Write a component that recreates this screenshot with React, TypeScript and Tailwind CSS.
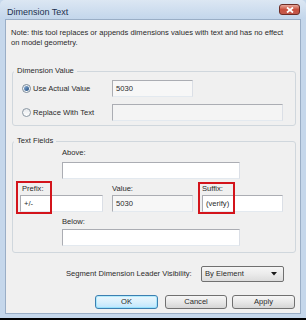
export default function App() {
  const inputBase =
    "h-[17px] border border-[#abadb3] border-r-[#dbdfe6] border-b-[#e3e9ef] flex items-center px-[3px]";
  const btn =
    "h-[14px] rounded-[3px] border border-[#707070] bg-gradient-to-b from-[#f6f6f6] via-[#e8e8e8] to-[#d6d6d6] flex items-center justify-center text-[#2a2a2a]";
  return (
    <div className="w-[306px] h-[320px] flex flex-col bg-[#c5d7eb] border-b-2 border-black font-['Liberation_Sans',sans-serif] text-[7.6px] leading-[10px] text-[#2a2a2a] overflow-hidden">
      {/* title bar */}
      <div className="h-[19px] flex items-start pl-[7px] pr-[6px] bg-gradient-to-b from-[#dce7f3] to-[#c3d6eb] rounded-t-[5px] shrink-0">
        <span className="text-[9px] leading-[10px] text-[#1e3250] mt-[7px]">Dimension Text</span>
        <div className="ml-auto mt-[4px] w-[21px] h-[11px] rounded-[3px] border border-[#6e2c24] bg-gradient-to-b from-[#e6a89c] via-[#c9503f] to-[#c2594b] flex items-center justify-center">
          <svg width="8" height="6" viewBox="0 0 8 6">
            <path d="M1 0.5 L7 5.5 M7 0.5 L1 5.5" stroke="white" strokeWidth="1.8" />
          </svg>
        </div>
      </div>

      {/* body */}
      <div className="mx-[5px] h-[295px] bg-[#f0f0f0] border border-[#9aaec6] flex flex-col shrink-0">
        <div className="pl-[5px] mt-[8px] whitespace-nowrap">
          <div>Note: this tool replaces or appends dimensions values with text and has no effect</div>
          <div>on model geometry.</div>
        </div>

        {/* Dimension Value */}
        <fieldset className="ml-[6px] w-[284px] mt-[18px] border border-[#d0d7dd] rounded-[3px] pb-[4px]">
          <legend className="ml-[1px] px-[3px] leading-[10px]">Dimension Value</legend>
          <div className="mt-[4px] flex items-center h-[17px]">
            <div className="w-[99px] flex items-center">
              <div className="ml-[9px] w-[9px] h-[9px] rounded-full border border-[#7a8a99] bg-gradient-to-b from-[#e9edf0] to-[#ffffff] flex items-center justify-center">
                <div className="w-[5px] h-[5px] rounded-full bg-gradient-to-br from-[#8fb3d9] to-[#1d4a7d]" />
              </div>
              <span className="ml-[2px]">Use Actual Value</span>
            </div>
            <div className={inputBase + " w-[81px] bg-[#f7f7f7]"}>5030</div>
          </div>
          <div className="mt-[7px] flex items-center h-[17px]">
            <div className="w-[99px] flex items-center">
              <div className="ml-[9px] w-[9px] h-[9px] rounded-full border border-[#8a97a3] bg-gradient-to-b from-[#e6e9ec] to-[#ffffff]" />
              <span className="ml-[2px]">Replace With Text</span>
            </div>
            <div className={inputBase + " w-[171px] bg-[#f4f4f4]"} />
          </div>
        </fieldset>

        {/* Text Fields */}
        <fieldset className="ml-[6px] w-[284px] mt-[10px] border border-[#d0d7dd] rounded-[3px] pb-[6px]">
          <legend className="ml-[1px] px-[3px] leading-[10px]">Text Fields</legend>
          <div className="mt-[2px] ml-[49px]">Above:</div>
          <div className={inputBase + " mt-[4px] ml-[49px] w-[178px] h-[16px] bg-white"} />
          <div className="mt-[5px] flex">
            <div className="ml-[7px] w-[83px] relative">
              <div className="pl-[2px]">Prefix:</div>
              <div className={inputBase + " mt-[1px] w-[83px] bg-white"}>+/-</div>
              <div className="absolute left-[-4px] top-[-3px] w-[36px] h-[33px] border-2 border-[#d3141b]" />
            </div>
            <div className="ml-[9px] w-[81px]">
              <div>Value:</div>
              <div className={inputBase + " mt-[1px] w-[81px] bg-[#f7f7f7]"}>5030</div>
            </div>
            <div className="ml-[9px] w-[81px] relative">
              <div>Suffix:</div>
              <div className={inputBase + " mt-[1px] w-[81px] bg-white"}>(verify)</div>
              <div className="absolute left-[-4px] top-[-2px] w-[37px] h-[32px] border-2 border-[#d3141b]" />
            </div>
          </div>
          <div className="mt-[5px] ml-[49px]">Below:</div>
          <div className={inputBase + " mt-[2px] ml-[49px] w-[178px] bg-white"} />
        </fieldset>

        {/* Segment row */}
        <div className="mt-[13px] flex items-center h-[16px]">
          <div className="ml-[60px] w-[135px]">Segment Dimension Leader Visibility:</div>
          <div className="w-[83px] h-[16px] rounded-[2px] border border-[#707070] bg-gradient-to-b from-[#f6f6f6] via-[#ebebeb] to-[#dcdcdc] flex items-center pl-[3px] pr-[6px]">
            <span>By Element</span>
            <svg className="ml-auto" width="6" height="4" viewBox="0 0 6 4">
              <path d="M0 0 L6 0 L3 3.5 Z" fill="#1a1a1a" />
            </svg>
          </div>
        </div>

        {/* Buttons */}
        <div className="mt-[13px] flex">
          <div className="ml-[89px] w-[63px] h-[14px] rounded-[3px] border border-[#3c7fb1] bg-gradient-to-b from-[#eaf6fd] via-[#d9f0fc] to-[#bee6fd] flex items-center justify-center shadow-[inset_0_0_0_1px_#48d7fb55]">
            OK
          </div>
          <div className={btn + " ml-[7px] w-[62px]"}>Cancel</div>
          <div className={btn + " ml-[5px] w-[63px]"}>Apply</div>
        </div>
      </div>
    </div>
  );
}
